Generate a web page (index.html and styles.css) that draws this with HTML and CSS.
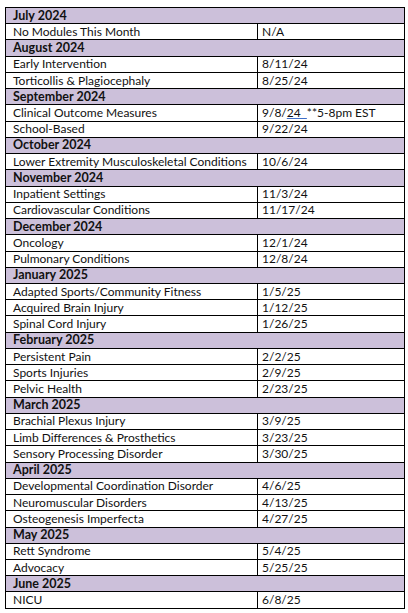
FILE: index.html
```html
<!DOCTYPE html>
<html lang="en">
<head>
<meta charset="utf-8">
<title>Module Schedule</title>
<link rel="stylesheet" href="styles.css">
</head>
<body>
<table class="schedule">
  <colgroup><col class="col-topic"><col class="col-date"></colgroup>
  <tbody>
    <tr class="month"><td colspan="2">July 2024</td></tr>
    <tr><td>No Modules This Month</td><td>N/A</td></tr>
    <tr class="month"><td colspan="2">August 2024</td></tr>
    <tr><td>Early Intervention</td><td>8/11/24</td></tr>
    <tr><td>Torticollis &amp; Plagiocephaly</td><td>8/25/24</td></tr>
    <tr class="month"><td colspan="2">September 2024</td></tr>
    <tr><td>Clinical Outcome Measures</td><td>9/8/<span class="mark">24&nbsp;&nbsp;</span>**5-8pm EST</td></tr>
    <tr><td>School-Based</td><td>9/22/24</td></tr>
    <tr class="month"><td colspan="2">October 2024</td></tr>
    <tr><td>Lower Extremity Musculoskeletal Conditions</td><td>10/6/24</td></tr>
    <tr class="month"><td colspan="2">November 2024</td></tr>
    <tr><td>Inpatient Settings</td><td>11/3/24</td></tr>
    <tr><td>Cardiovascular Conditions</td><td>11/17/24</td></tr>
    <tr class="month"><td colspan="2">December 2024</td></tr>
    <tr><td>Oncology</td><td>12/1/24</td></tr>
    <tr><td>Pulmonary Conditions</td><td>12/8/24</td></tr>
    <tr class="month"><td colspan="2">January 2025</td></tr>
    <tr><td>Adapted Sports/Community Fitness</td><td>1/5/25</td></tr>
    <tr><td>Acquired Brain Injury</td><td>1/12/25</td></tr>
    <tr><td>Spinal Cord Injury</td><td>1/26/25</td></tr>
    <tr class="month"><td colspan="2">February 2025</td></tr>
    <tr><td>Persistent Pain</td><td>2/2/25</td></tr>
    <tr><td>Sports Injuries</td><td>2/9/25</td></tr>
    <tr><td>Pelvic Health</td><td>2/23/25</td></tr>
    <tr class="month"><td colspan="2">March 2025</td></tr>
    <tr><td>Brachial Plexus Injury</td><td>3/9/25</td></tr>
    <tr><td>Limb Differences &amp; Prosthetics</td><td>3/23/25</td></tr>
    <tr><td>Sensory Processing Disorder</td><td>3/30/25</td></tr>
    <tr class="month"><td colspan="2">April 2025</td></tr>
    <tr><td>Developmental Coordination Disorder</td><td>4/6/25</td></tr>
    <tr><td>Neuromuscular Disorders</td><td>4/13/25</td></tr>
    <tr><td>Osteogenesis Imperfecta</td><td>4/27/25</td></tr>
    <tr class="month"><td colspan="2">May 2025</td></tr>
    <tr><td>Rett Syndrome</td><td>5/4/25</td></tr>
    <tr><td>Advocacy</td><td>5/25/25</td></tr>
    <tr class="month"><td colspan="2">June 2025</td></tr>
    <tr><td>NICU</td><td>6/8/25</td></tr>
  </tbody>
</table>
</body>
</html>
```

FILE: styles.css
```css
html, body {
  margin: 0;
  padding: 0;
  background: #ffffff;
}

body {
  padding: 7px 0 0 5px;
  font-family: Lato, "Open Sans", sans-serif;
  font-size: 12px;
  color: #111111;
}

.schedule {
  border-collapse: collapse;
  width: 400px;
  table-layout: fixed;
  border: 1px solid #000000;
}

.col-topic {
  width: 252px;
}

.schedule tr {
  height: 16.24px;
}

.schedule td {
  border: 1px solid #000000;
  padding: 0 4px 0 7px;
  height: 15.24px;
  line-height: 14px;
  vertical-align: middle;
  white-space: nowrap;
  overflow: hidden;
}

.schedule td + td {
  padding-left: 4px;
}

.month td {
  background: #ccc0da;
  font-weight: bold;
  font-size: 12.5px;
}

.mark {
  text-decoration: underline;
  text-decoration-color: #3f6fc8;
  text-underline-offset: 1px;
}
```
